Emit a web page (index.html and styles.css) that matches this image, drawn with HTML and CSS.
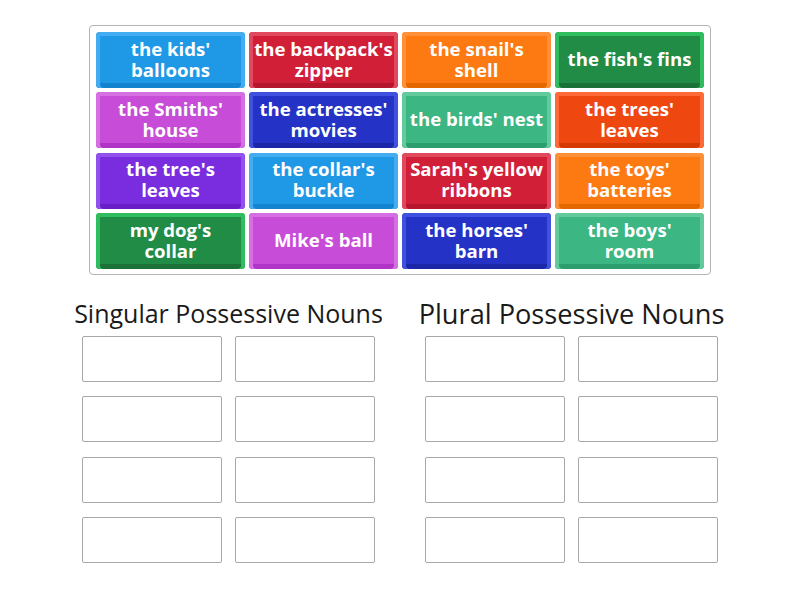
FILE: index.html
```html
<!DOCTYPE html>
<html>
<head>
<meta charset="utf-8">
<link rel="stylesheet" href="styles.css">
</head>
<body>
<div class="page">
  <div class="pool">
    <div class="tile blue">the kids'<br>balloons</div>
    <div class="tile red">the backpack's<br>zipper</div>
    <div class="tile orange">the snail's<br>shell</div>
    <div class="tile green">the fish's fins</div>
    <div class="tile pink">the Smiths'<br>house</div>
    <div class="tile navy">the actresses'<br>movies</div>
    <div class="tile teal">the birds' nest</div>
    <div class="tile vermil">the trees'<br>leaves</div>
    <div class="tile purple">the tree's<br>leaves</div>
    <div class="tile blue">the collar's<br>buckle</div>
    <div class="tile red">Sarah's yellow<br>ribbons</div>
    <div class="tile orange">the toys'<br>batteries</div>
    <div class="tile green">my dog's<br>collar</div>
    <div class="tile pink">Mike's ball</div>
    <div class="tile navy">the horses'<br>barn</div>
    <div class="tile teal">the boys'<br>room</div>
  </div>
  <div class="groups">
    <div class="group">
      <div class="title small">Singular Possessive Nouns</div>
      <div class="slots">
        <div class="slot"></div><div class="slot"></div>
        <div class="slot"></div><div class="slot"></div>
        <div class="slot"></div><div class="slot"></div>
        <div class="slot"></div><div class="slot"></div>
      </div>
    </div>
    <div class="group">
      <div class="title large">Plural Possessive Nouns</div>
      <div class="slots">
        <div class="slot"></div><div class="slot"></div>
        <div class="slot"></div><div class="slot"></div>
        <div class="slot"></div><div class="slot"></div>
        <div class="slot"></div><div class="slot"></div>
      </div>
    </div>
  </div>
</div>
</body>
</html>
```
FILE: styles.css
```css
html, body {
  margin: 0;
  padding: 0;
  background: #fff;
  font-family: "Open Sans", "Liberation Sans", sans-serif;
}
.page {
  width: 800px;
  height: 600px;
  padding-top: 25px;
  box-sizing: border-box;
  display: flex;
  flex-direction: column;
  align-items: center;
}
.pool {
  width: 622px;
  box-sizing: border-box;
  border: 1px solid #b4b4b4;
  border-radius: 4px;
  padding: 6px 6px 5px 6px;
  display: grid;
  grid-template-columns: repeat(4, 149px);
  grid-auto-rows: 56px;
  column-gap: 4px;
  row-gap: 4.4px;
}
.tile {
  --base: #209ae8;
  --light: #45acf0;
  --dark: #1482cf;
  background: var(--base);
  border-radius: 4px;
  box-shadow: inset 0 4px 0 var(--light), inset 4px 0 0 var(--light), inset -4px 0 0 var(--light), inset 0 -5px 0 var(--dark);
  color: #fff;
  font-weight: 700;
  font-size: 18.6px;
  line-height: 21px;
  text-align: center;
  display: flex;
  align-items: center;
  justify-content: center;
  padding: 0 2px 3px;
  box-sizing: border-box;
  white-space: nowrap;
}
.blue { --base: #1f98e6; --light: #44acf0; --dark: #1483cf; }
.red { --base: #d21f38; --light: #e04a5c; --dark: #b5152d; }
.orange { --base: #fd7a12; --light: #ff9038; --dark: #e36800; }
.green { --base: #218c46; --light: #2fbd5e; --dark: #1b7238; }
.pink { --base: #c74cd7; --light: #d56fe2; --dark: #b034c6; }
.navy { --base: #2433c6; --light: #4050df; --dark: #1b27a6; }
.teal { --base: #3cb683; --light: #63ca9c; --dark: #2c9e6d; }
.vermil { --base: #ef4710; --light: #ff6a38; --dark: #d53a05; }
.purple { --base: #7a2ddf; --light: #9151ec; --dark: #6820c6; }

.groups {
  margin-top: 19px;
  display: flex;
  gap: 51px;
}
.group {
  width: 292px;
  display: flex;
  flex-direction: column;
  align-items: center;
}
.title {
  color: #1a1a1a;
  white-space: nowrap;
  height: 38px;
  display: flex;
  align-items: center;
}
.title.small { font-size: 25px; }
.title.large { font-size: 27.2px; }
.slots {
  margin-top: 4px;
  display: grid;
  grid-template-columns: repeat(2, 140px);
  grid-auto-rows: 46px;
  column-gap: 13px;
  row-gap: 14.3px;
}
.slot {
  border: 1px solid #a8a8a8;
  border-radius: 2px;
  box-sizing: border-box;
  background: #fff;
}
```
